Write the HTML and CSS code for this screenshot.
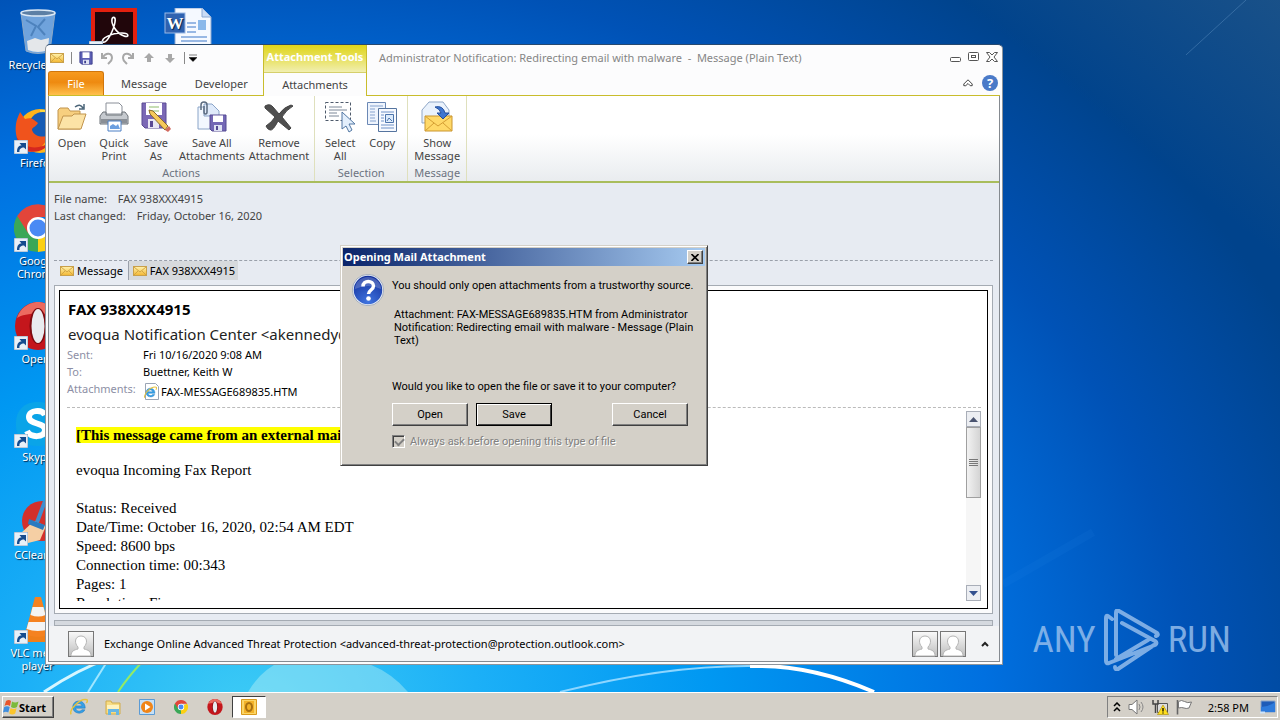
FILE: index.html
```html
<!DOCTYPE html>
<html lang="en">

<head>
    <meta charset="utf-8">
    <title>Desktop</title>
    <link rel="stylesheet" href="styles.css">
</head>

<body>
    <!-- shared icons -->
    <svg class="defs" width="0" height="0" aria-hidden="true">
        <defs>
            <linearGradient id="env" x1="0" y1="0" x2="0" y2="1">
                <stop offset="0" stop-color="#fff3b0" />
                <stop offset="1" stop-color="#f3b62f" />
            </linearGradient>
            <linearGradient id="grey" x1="0" y1="0" x2="0" y2="1">
                <stop offset="0" stop-color="#fafafa" />
                <stop offset="1" stop-color="#bdbdbd" />
            </linearGradient>
            <symbol id="mail" viewBox="0 0 14 12">
                <rect x=".5" y="1.5" width="13" height="9" fill="url(#env)" stroke="#c9a04a" />
                <path d="M1 2l6 5 6-5M1 10l4-4M13 10L9 6" fill="none" stroke="#d3a644" />
            </symbol>
            <symbol id="shortcut" viewBox="0 0 14 14">
                <rect width="14" height="14" fill="#e8f0f8" stroke="#8fa5bd" />
                <path d="M3 12C3 7 5 5.500 7.500 5.500L5.500 3H12v6.500L10 7.500C7 7.500 5 9 5.500 12z" fill="#154c8f" />
            </symbol>
            <symbol id="floppy" viewBox="0 0 16 16">
                <path d="M1 1h14v14H3l-2-2z" fill="#5c5fb5" stroke="#3b3d8c" />
                <path d="M4 1.500h8V8H4z" fill="#fff" />
                <path d="M4.500 10h7v5h-7z" fill="#dfe2f3" />
                <path d="M6 11h2v3H6z" fill="#3b3d8c" />
            </symbol>
            <symbol id="person" viewBox="0 0 26 26">
                <rect x=".5" y=".5" width="25" height="25" fill="url(#grey)" stroke="#777" />
                <path d="M3 25c0-5 3-6 7-7v-2c-2-2-2.500-4-2.500-6C7.500 7 10 5 13 5s5.500 2 5.500 5c0 2-.5 4-2.500 6v2c4 1 7 2 7 7z" fill="#fff" stroke="#b5b5b5" />
            </symbol>
            <symbol id="chrome" viewBox="0 0 48 48">
                <path d="M24 24L44.800 12A24 24 0 0 1 24 48z" fill="#fcd012" />
                <path d="M24 24v24A24 24 0 0 1 3.200 12z" fill="#3aa757" />
                <path d="M24 13h21A24 24 0 0 0 3.200 12L14 29z" fill="#e2453a" />
                <circle cx="24" cy="24" r="11" fill="#fff" />
                <circle cx="24" cy="24" r="8.500" fill="#4a8af4" />
            </symbol>
            <symbol id="opera" viewBox="0 0 48 48">
                <ellipse cx="24" cy="24" rx="23" ry="24" fill="#c4161c" />
                <path d="M3 16C8 2 20 0 24 0s16 2 21 16c-8-6-34-6-42 0z" fill="#ec6a5f" />
                <ellipse cx="24" cy="24" rx="8.500" ry="18" fill="#7d0c10" />
                <ellipse cx="24" cy="24" rx="6.500" ry="17" fill="#e9ecef" />
            </symbol>
            <symbol id="ie" viewBox="0 0 16 16">
                <path d="M13.500 9H5c.3 3 4.500 3.500 5.500 1.500h2.700c-1.700 4.500-10.700 4-10.700-2.500 0-7 11-7.500 11 1zM5 7h5.600C10.200 4.200 5.500 4.200 5 7z" fill="#35a0e6" stroke="#1c78c0" stroke-width=".5" />
                <path d="M1 14.500C-1 11 8 0 15 1.500c1 .8.300 2-.5 3" fill="none" stroke="#e9c33b" stroke-width="1.300" />
            </symbol>
        </defs>
    </svg>

    <main class="desktop">
        <svg class="wallpaper" viewBox="0 0 1280 693" preserveAspectRatio="none" aria-hidden="true">
            <defs>
                <radialGradient id="sky" gradientUnits="userSpaceOnUse" cx="250" cy="720" r="1150" gradientTransform="translate(250 720) scale(1 .8) translate(-250 -720)">
                    <stop offset="0" stop-color="#3fcdf5" />
                    <stop offset=".2" stop-color="#1cb0f7" />
                    <stop offset=".4" stop-color="#0098f2" />
                    <stop offset=".64" stop-color="#0070e0" />
                    <stop offset=".82" stop-color="#0052b6" />
                    <stop offset="1" stop-color="#00438c" />
                </radialGradient>
                <linearGradient id="haze" x1="0" y1="1" x2="1" y2="0">
                    <stop offset=".5" stop-color="#2a5a86" stop-opacity="0" />
                    <stop offset="1" stop-color="#2a5a86" stop-opacity=".6" />
                </linearGradient>
            </defs>
            <rect width="1280" height="693" fill="url(#sky)" />
            <rect x="960" width="320" height="260" fill="url(#haze)" />
            <path d="M1186 55l60-55" stroke="#5f93c4" opacity=".45" />
            <path d="M1003 585l90-52" stroke="#3b9bf5" stroke-width="8" opacity=".07" />
            <path d="M248 693q22-38 70-38 60 2 90 38z" fill="#c5f4f5" opacity=".4" />
            <path d="M44 693q34-23 66-34" stroke="#d5f6ff" stroke-width="3" fill="none" />
            <path d="M88 693l22-35" stroke="#9fe6ff" stroke-width="2" />
            <path d="M118 693q10-15 24-30" stroke="#93ea66" stroke-width="2" fill="none" />
            <path d="M560 693q110-28 200-26" stroke="#8dd6ff" stroke-width="2" fill="none" />
            <path d="M750 667q60-2 124 26" stroke="#fff" stroke-width="4" fill="none" />
        </svg>

        <ul class="shortcuts">
            <li>
                <svg viewBox="0 0 48 48">
                    <path d="M7 5h34l-5 38q-12 5-24 0z" fill="#b9d4ee" fill-opacity=".6" stroke="#8ea9c6" />
                    <path d="M13 33l8-3 6 2 8-2-1 12q-10 4-20 0z" fill="#e4e7ea" />
                    <path d="M12 12l10 6-5 10m14-17l-7 8 7 8" fill="none" stroke="#4d82bd" stroke-width="2" />
                    <ellipse cx="24" cy="5" rx="17" ry="3" fill="#5c7fa5" stroke="#dde9f5" stroke-width="1.500" />
                </svg>
                <span>Recycle Bin</span>
            </li>
            <li>
                <svg viewBox="0 0 48 48">
                    <circle cx="26" cy="25" r="22" fill="#ffb31a" />
                    <path d="M26 4c14-2 22 8 22 20H28z" fill="#ffd83d" />
                    <circle cx="29" cy="20" r="14" fill="#155bb5" />
                    <path d="M2 18C3 12 5 9 6 6l5 7c4-1 7-1 9 1l4 3c-2 4-6 4-6 7 2 7 12 8 16 5-2 10-10 16-18 17C7 44 0 32 2 18z" fill="#f0531c" />
                    <path d="M2 30c8 14 24 14 34 6-4 10-26 18-34-6z" fill="#d5271f" />
                    <use href="#shortcut" y="34" width="14" height="14" />
                </svg>
                <span>Firefox</span>
            </li>
            <li>
                <svg viewBox="0 0 48 48">
                    <use href="#chrome" width="48" height="48" />
                    <use href="#shortcut" y="34" width="14" height="14" />
                </svg>
                <span>Google Chrome</span>
            </li>
            <li>
                <svg viewBox="0 0 48 48">
                    <use href="#opera" width="48" height="48" />
                    <use href="#shortcut" y="34" width="14" height="14" />
                </svg>
                <span>Opera</span>
            </li>
            <li>
                <svg viewBox="0 0 48 48">
                    <rect x="2" y="2" width="44" height="44" rx="20" fill="#0aa4e8" />
                    <path d="M31 15c-3-6-16-5-16 2 0 8 16 5 16 13 0 8-15 8-18 1" fill="none" stroke="#fff" stroke-width="6" />
                    <use href="#shortcut" y="34" width="14" height="14" />
                </svg>
                <span>Skype</span>
            </li>
            <li>
                <svg viewBox="0 0 48 48">
                    <circle cx="28" cy="23" r="20" fill="#d3302b" />
                    <path d="M31 3l-9 24" stroke="#3f8fd0" stroke-width="4" />
                    <path d="M6 36l14-13 12 5-6 14-12 3z" fill="#f5cfa4" />
                    <path d="M15 21l16 6-2 5-15-6z" fill="#2a7abf" />
                    <use href="#shortcut" y="34" width="14" height="14" />
                </svg>
                <span>CCleaner</span>
            </li>
            <li>
                <svg viewBox="0 0 48 48">
                    <path d="M9 35h31l4 11H6z" fill="#ef7f1a" />
                    <path d="M21 1h6l10 37q-13 6-26 0z" fill="#f58220" />
                    <path d="M18.500 11h11l2 8q-7 3-15 0zM14.500 26h19l2 7q-12 4-23 0z" fill="#f4f4f4" />
                    <use href="#shortcut" y="34" width="14" height="14" />
                </svg>
                <span>VLC media player</span>
            </li>
            <li>
                <svg viewBox="0 0 48 48">
                    <rect x="4" y="2" width="42" height="44" fill="#21060b" stroke="#e3200f" stroke-width="4" />
                    <path d="M14 34c-3-3 8-9 19-9 8 0 7 5 2 3-8-3-13-12-12-17 1-3 4-2 3 3-1 7-8 22-12 20z" fill="none" stroke="#fff" stroke-width="1.600" />
                    <use href="#shortcut" y="33" width="14" height="14" />
                </svg>
            </li>
            <li>
                <svg viewBox="0 0 48 48">
                    <path d="M11 0h27l9 9v39H11z" fill="#f5f9ff" stroke="#8ba8d2" />
                    <path d="M38 0v9h9" fill="#c9dbf5" stroke="#8ba8d2" />
                    <path d="M23 15h9M23 19h9M23 24h9M17 29h26M17 33h26" stroke="#7aa2dc" stroke-width="1.500" />
                    <rect x="34" y="12" width="8" height="10" fill="#8ab8ea" />
                    <rect x="1" y="5" width="20" height="20" fill="#2f62b0" stroke="#9ab9e6" />
                    <text class="word-mark" x="11" y="21">W</text>
                </svg>
            </li>
        </ul>

        <div class="watermark">
            <span>ANY</span>
            <svg width="56" height="62" viewBox="0 0 56 62">
                <path d="M8 10L4 7q-2-1-2 2v43q0 3 3 2l46-18q3-2 0-4L18 14M12 46V4q0-4 3-2l38 22q2 2-1 3M50 36L14 60q-3 1-3-2M44 31L12 50" fill="none" stroke="currentColor" stroke-width="4" stroke-linejoin="round" stroke-linecap="round" />
            </svg>
            <span>RUN</span>
        </div>

        <section class="window">
            <header class="caption">
                <div class="caption-left">
                    <div class="quick-access">
                        <svg width="14" height="12"><use href="#mail" /></svg>
                        <i class="sep"></i>
                        <button aria-label="Save"><svg width="14" height="14"><use href="#floppy" /></svg></button>
                        <button aria-label="Undo"><svg width="14" height="14" viewBox="0 0 14 14"><path d="M2 2v5h5M3 6c3-5 9-4 9 1 0 3-2 4-4 6" fill="none" stroke="#a8a8a8" stroke-width="2" /></svg></button>
                        <button aria-label="Redo"><svg width="14" height="14" viewBox="0 0 14 14"><path d="M12 2v5H7M11 6C8 1 2 2 2 7c0 3 2 4 4 6" fill="none" stroke="#a8a8a8" stroke-width="2" /></svg></button>
                        <button aria-label="Previous"><svg width="14" height="14" viewBox="0 0 14 14"><path d="M7 2l5 5H9v4H5V7H2z" fill="#a8a8a8" /></svg></button>
                        <button aria-label="Next"><svg width="14" height="14" viewBox="0 0 14 14"><path d="M7 12l5-5H9V3H5v4H2z" fill="#a8a8a8" /></svg></button>
                        <i class="sep"></i>
                        <button class="more" aria-label="Customize"><svg width="8" height="8" viewBox="0 0 8 8"><path d="M0 1h8M0 3.500h8L4 7.500z" fill="#000" stroke="#000" stroke-width=".5" /></svg></button>
                    </div>
                    <nav class="tabs">
                        <button class="tab file">File</button>
                        <button class="tab">Message</button>
                        <button class="tab">Developer</button>
                    </nav>
                </div>
                <div class="context">
                    <div class="context-title">Attachment Tools</div>
                    <button class="tab active">Attachments</button>
                </div>
                <div class="caption-right">
                    <div class="title-row">
                        <h1>Administrator Notification: Redirecting email with malware &nbsp;-&nbsp; Message (Plain Text)</h1>
                        <div class="controls">
                            <button aria-label="Minimize"><svg width="12" height="12" viewBox="0 0 12 12"><rect x=".5" y="5.500" width="10" height="4" rx="1" fill="#fff" stroke="#555" /></svg></button>
                            <button aria-label="Restore"><svg width="12" height="12" viewBox="0 0 12 12"><rect x=".5" y=".5" width="10" height="8" rx="1" fill="#fff" stroke="#555" /><rect x="3.500" y="3.500" width="4" height="2" fill="#fff" stroke="#555" /></svg></button>
                            <button aria-label="Close"><svg width="12" height="12" viewBox="0 0 12 12"><path d="M.5 .5h3L6 3l2.500-2.500h3L8 5l3.500 4.500h-3L6 7l-2.500 2.500h-3L4 5z" fill="#fff" stroke="#555" /></svg></button>
                        </div>
                    </div>
                    <div class="help-row">
                        <button aria-label="Collapse ribbon"><svg width="10" height="8" viewBox="0 0 10 8"><path d="M5 .8L.8 5v1.700h2L5 4.500l2.200 2.200h2V5z" fill="#fff" stroke="#444" /></svg></button>
                        <button class="help" aria-label="Help">?</button>
                    </div>
                </div>
            </header>

            <div class="frame">
                <div class="ribbon">
                    <div class="group">
                        <div class="buttons">
                            <button>
                                <svg viewBox="0 0 32 32"><path d="M2 28V9l2-2h8l2 3h10v18z" fill="#f7cf7f" stroke="#c1944d" /><path d="M2 28l5-13h9l2-2h12l-5 15z" fill="#fce3a6" stroke="#c1944d" /><path d="M19 6q5-4 8 1m1-4v5h-5" fill="none" stroke="#4b6579" stroke-width="1.500" /></svg>
                                <span>Open</span>
                            </button>
                            <button>
                                <svg viewBox="0 0 32 32"><path d="M8 13V2h13l3 3v8z" fill="#fff" stroke="#8a8f98" /><path d="M5 11h3v3h16v-3h3l3 4v8H2v-8z" fill="#c6cacf" stroke="#6d7278" /><path d="M3 18h26v4H3z" fill="#8a8f96" /><path d="M10 20h13v10H10z" fill="#fff" stroke="#4b7fc4" /><path d="M12 28v-3l3-2 3 2 2-2 2 5z" fill="#6c9fe0" /></svg>
                                <span>Quick<br>Print</span>
                            </button>
                            <button>
                                <svg viewBox="0 0 32 32"><path d="M2 2h24v25H5l-3-3z" fill="#7b68b5" stroke="#5b4a93" /><path d="M6 2h16v12H6z" fill="#fff" /><path d="M9 6h10M9 10h10" stroke="#8dbb6a" /><path d="M8 18h11v9H8z" fill="#e9e7f3" /><path d="M10 20h3v6h-3z" fill="#5b4a93" /><path d="M9 9l4 1 15 15-3 4L10 13z" fill="#f6c95b" stroke="#8b6a2c" /><path d="M25 29l4-4 2 3-3 3z" fill="#d26a5f" /></svg>
                                <span>Save<br>As</span>
                            </button>
                            <button>
                                <svg viewBox="0 0 32 32"><path d="M2 6h13l6 6v16H2z" fill="#f3f8ff" stroke="#8aa4c8" /><path d="M8 3h8l7 7v5H8z" fill="#dfeafa" stroke="#8aa4c8" /><path d="M5 9v-5q0-3 3-3t3 3v7q0 2-1.500 2T8 11V5" fill="none" stroke="#5c6c80" stroke-width="1.500" /><path d="M14 14h16v16H16l-2-2z" fill="#7468b5" stroke="#544a93" /><path d="M17 14.500h10V21H17z" fill="#fff" /><path d="M18 24h8v6h-8z" fill="#dfe2f3" /><path d="M20 25h2v4h-2z" fill="#544a93" /></svg>
                                <span>Save All<br>Attachments</span>
                            </button>
                            <button>
                                <svg viewBox="0 0 32 32"><path d="M2 5q5-3 8 1l6 7Q21 6 28 4l2 1q-7 4-11 11l9 11-2 2-11-9q-5 10-8 9t-4-4q6-4 9-9L2 7z" fill="#4f4f4f" stroke="#444" /></svg>
                                <span>Remove<br>Attachment</span>
                            </button>
                        </div>
                        <div class="group-name">Actions</div>
                    </div>
                    <div class="group">
                        <div class="buttons">
                            <button>
                                <svg viewBox="0 0 32 32"><path d="M1.500 1.500h25v18h-25z" fill="none" stroke="#4e5a6b" stroke-dasharray="3 2" /><path d="M5 6h13M5 9h18M5 12h8M5 15h10" stroke="#7d8898" /><path d="M18 11v17l4-3 3 6 3-2-3-6h6z" fill="#e3effc" stroke="#5277a3" /></svg>
                                <span>Select<br>All</span>
                            </button>
                            <button>
                                <svg viewBox="0 0 32 32"><path d="M1.500 1.500h18v22h-18z" fill="#eef4fd" stroke="#6b88b5" /><path d="M4 5h13M4 8h5M4 11h5M4 14h5M4 17h5M4 20h6" stroke="#86a3cf" /><path d="M12.500 7.500h18v23h-18z" fill="#f7faff" stroke="#55749f" /><path d="M15 11h13M15 14h3M15 17h3M15 20h3M15 24h13M15 27h13" stroke="#6f92c8" /><path d="M19.500 13.500h8v8h-8zM21 20l2-3 3 3" fill="#dcebfb" stroke="#4d75ad" /></svg>
                                <span>Copy</span>
                            </button>
                        </div>
                        <div class="group-name">Selection</div>
                    </div>
                    <div class="group">
                        <div class="buttons">
                            <button>
                                <svg viewBox="0 0 32 32"><path d="M1 22V9l7-8h14l6 8v12z" fill="#eaf2fc" stroke="#8fa7c7" /><path d="M4 15h27v15H4z" fill="#ffd968" stroke="#c9952e" /><path d="M4 15l13 10 14-10M4 30l9-8M31 30l-9-8" fill="none" stroke="#d49e33" /><path d="M14 6q8-2 10 6h4l-6 6-6-6h4q-1-4-6-6z" fill="#3f76cf" stroke="#234f9d" /></svg>
                                <span>Show<br>Message</span>
                            </button>
                        </div>
                        <div class="group-name">Message</div>
                    </div>
                </div>

                <div class="info">
                    <p>File name: <b>FAX 938XXX4915</b></p>
                    <p>Last changed: <b>Friday, October 16, 2020</b></p>
                </div>

                <div class="doc-tabs">
                    <button><svg width="14" height="12"><use href="#mail" /></svg>Message</button>
                    <button class="selected"><svg width="14" height="12"><use href="#mail" /></svg>FAX 938XXX4915</button>
                </div>

                <div class="panel">
                    <article class="mail">
                        <h2>FAX 938XXX4915</h2>
                        <p class="from">evoqua Notification Center &lt;akennedy@</p>
                        <dl>
                            <dt>Sent:</dt>
                            <dd>Fri 10/16/2020 9:08 AM</dd>
                            <dt>To:</dt>
                            <dd>Buettner, Keith W</dd>
                            <dt>Attachments:</dt>
                            <dd class="attachment">
                                <svg width="18" height="18" viewBox="0 0 18 18"><path d="M2.500.5h10l3 3v13h-13z" fill="#fff" stroke="#9aa5b5" /><use href="#ie" x="1" y="3" width="13" height="13" /></svg>
                                FAX-MESSAGE689835.HTM
                            </dd>
                        </dl>
                        <div class="reading">
                            <div class="text">
                                <p class="warning"><mark>[This message came from an external mail source]</mark></p>
                                <p>evoqua Incoming Fax Report</p>
                                <p>Status: Received<br>Date/Time: October 16, 2020, 02:54 AM EDT<br>Speed: 8600 bps<br>Connection time: 00:343<br>Pages: 1<br>Resolution: Fine</p>
                            </div>
                            <div class="scrollbar">
                                <button aria-label="Scroll up"><svg width="9" height="5" viewBox="0 0 9 5"><path d="M4.500 0L9 5H0z" fill="#4a5470" /></svg></button>
                                <div class="thumb"><i></i></div>
                                <button aria-label="Scroll down"><svg width="9" height="5" viewBox="0 0 9 5"><path d="M0 0h9L4.500 5z" fill="#33508e" /></svg></button>
                            </div>
                        </div>
                    </article>
                </div>

                <div class="splitter"></div>
                <footer class="people">
                    <svg width="26" height="26"><use href="#person" /></svg>
                    <span>Exchange Online Advanced Threat Protection &lt;advanced-threat-protection@protection.outlook.com&gt;</span>
                    <svg width="26" height="26"><use href="#person" /></svg>
                    <svg width="26" height="26"><use href="#person" /></svg>
                    <button aria-label="Expand"><svg width="8" height="6" viewBox="0 0 8 6"><path d="M1 5l3-3 3 3" fill="none" stroke="#222" stroke-width="2" /></svg></button>
                </footer>
            </div>
        </section>

        <section class="dialog" role="dialog" aria-labelledby="dialog-title">
            <header>
                <h2 id="dialog-title">Opening Mail Attachment</h2>
                <button aria-label="Close"><svg width="8" height="7" viewBox="0 0 8 7"><path d="M.5 0l7 7M7.500 0l-7 7" stroke="#000" stroke-width="1.600" /></svg></button>
            </header>
            <div class="dialog-body">
                <svg class="question" width="32" height="32" viewBox="0 0 32 32">
                    <defs>
                        <radialGradient id="ball" cx=".5" cy=".9" r=".9">
                            <stop offset="0" stop-color="#3f74e0" />
                            <stop offset="1" stop-color="#132f9a" />
                        </radialGradient>
                    </defs>
                    <circle cx="16" cy="16" r="15" fill="url(#ball)" stroke="#e6ecf5" stroke-width="1.500" />
                    <circle cx="16" cy="16" r="15.700" fill="none" stroke="#7f8b9f" stroke-width=".6" />
                    <path d="M3 15a13 12 0 0 1 26 0q-13-6-26 0z" fill="#fff" opacity=".2" />
                    <path d="M11 12.500c0-7 10.500-6.500 10.500-.5 0 4-5 4-5 8" fill="none" stroke="#fff" stroke-width="3.500" />
                    <circle cx="16.500" cy="24.500" r="2.300" fill="#fff" />
                </svg>
                <div class="dialog-text">
                    <p>You should only open attachments from a trustworthy source.</p>
                    <p class="detail">Attachment: FAX-MESSAGE689835.HTM from Administrator<br>Notification: Redirecting email with malware - Message (Plain<br>Text)</p>
                    <p>Would you like to open the file or save it to your computer?</p>
                    <div class="actions">
                        <button>Open</button>
                        <button class="default">Save</button>
                        <button class="cancel">Cancel</button>
                    </div>
                    <div class="check">
                        <input type="checkbox" id="always" checked disabled>
                        <label for="always">Always ask before opening this type of file</label>
                    </div>
                </div>
            </div>
        </section>
    </main>

    <footer class="taskbar">
        <button class="start">
            <svg width="16" height="16" viewBox="0 0 16 16">
                <path d="M3 2q3-2 5 0L7 7Q4 5 1.500 7z" fill="#e8542a" />
                <path d="M9 2.500q3 2 6.500 0L14 8q-3 2-6 0z" fill="#7cba3b" />
                <path d="M1.200 8Q4 6.500 6.700 8L5.300 13.500Q3 12 0 13.500z" fill="#3f8ede" />
                <path d="M7.600 9q3 2 6 0l-1.400 5.500q-3 2-6 0z" fill="#fbc52d" />
            </svg>
            Start
        </button>
        <nav class="pinned">
            <button aria-label="Internet Explorer"><svg width="18" height="18"><use href="#ie" width="18" height="18" /></svg></button>
            <button aria-label="Explorer"><svg width="18" height="18" viewBox="0 0 18 18"><path d="M2 3h5l1 2h8v11H2z" fill="#f7dc83" stroke="#d2ac4a" /><path d="M3 7h12v4H3z" fill="#fff3bf" /><path d="M4 17v-6h11v6h-3v-3H7v3z" fill="#68b7e4" /></svg></button>
            <button aria-label="Media Player"><svg width="18" height="18" viewBox="0 0 18 18"><path d="M1.500 1.500h15v15h-15z" fill="#c6e0f6" stroke="#5b9bd5" /><circle cx="9" cy="9" r="6" fill="#f08519" /><path d="M7 5.500l5.500 3.500L7 12.500z" fill="#fff" /></svg></button>
            <button aria-label="Chrome"><svg width="14" height="14"><use href="#chrome" /></svg></button>
            <button aria-label="Opera"><svg width="16" height="16"><use href="#opera" /></svg></button>
            <button class="pressed" aria-label="Outlook"><svg width="18" height="18" viewBox="0 0 18 18"><path d="M1.500 1.500h15v15h-15z" fill="#fbd566" stroke="#d99a1c" /><rect x="4" y="3" width="10" height="12" fill="#f3b229" /><ellipse cx="9" cy="9" rx="3" ry="4" fill="none" stroke="#a86f10" stroke-width="2" /></svg></button>
        </nav>
        <div class="tray">
            <svg width="8" height="10" viewBox="0 0 8 10"><path d="M1 4l3-3 3 3M1 9l3-3 3 3" fill="none" stroke="#000" stroke-width="1.500" /></svg>
            <svg width="17" height="16" viewBox="0 0 17 16"><path d="M1 5.500h3l5-4.500v14l-5-4.500H1z" fill="#fff" stroke="#777" /><path d="M11 5q2 3 0 6M13 3q4 5 0 10" fill="none" stroke="#888" /></svg>
            <svg width="17" height="16" viewBox="0 0 17 16"><path d="M5.500 4.500h10v9h-10z" fill="#ddd" stroke="#555" /><path d="M1 1v4h5V1M3.500 5v9" fill="none" stroke="#444" stroke-width="1.500" /><path d="M11 6l5.500 9.500h-11z" fill="#ffdf1c" stroke="#a88a00" stroke-width=".6" /><path d="M11 9v3.500M11 13.500v1" stroke="#000" stroke-width="1.300" /></svg>
            <svg width="17" height="16" viewBox="0 0 17 16"><path d="M1.500 1v14.500" stroke="#666" stroke-width="1.600" /><path d="M2.500 2.500q3-2 6 0t7 .5L13 9q-3 1-5 0t-5.500 0z" fill="#fff" stroke="#777" /></svg>
            <time>2:58 PM</time>
            <svg width="16" height="14" viewBox="0 0 16 14"><path d="M1 1h14v11H1z" fill="#1e5cb8" stroke="#8aa4c8" /><path d="M1 7q7 0 14-5v10H1z" fill="#2e7bdc" /><path d="M0 12.500h5" stroke="#cfe3f7" stroke-width="2" /></svg>
        </div>
    </footer>
</body>

</html>
```
FILE: styles.css
```css
* {
    box-sizing: border-box;
}

body {
    margin: 0;
    height: 100vh;
    display: flex;
    flex-direction: column;
    overflow: hidden;
    font-family: "Noto Sans", "Open Sans", sans-serif;
    font-size: 11px;
    color: #000;
}

h1,
h2,
p,
dl,
dd,
ul {
    margin: 0;
    padding: 0;
    font-weight: normal;
}

button {
    font: inherit;
    color: inherit;
    padding: 0;
    border: 0;
    background: none;
}

svg {
    flex: none;
}

.defs {
    position: absolute;
}

/* Desktop */
.desktop {
    position: relative;
    flex: 1;
    min-height: 0;
    background: #0073e2;
}

.wallpaper {
    position: absolute;
    width: 100%;
    height: 100%;
}

.shortcuts {
    position: absolute;
    top: 8px;
    left: 0;
    display: grid;
    grid-template-rows: repeat(7, 98px);
    grid-auto-flow: column;
    grid-auto-columns: 75px;
    list-style: none;
    color: #fff;
    line-height: 13px;
    text-align: center;
    text-shadow: 1px 1px 1px #024;
}

.shortcuts li {
    display: flex;
    flex-direction: column;
    align-items: center;
}

.shortcuts li svg {
    width: 48px;
    height: 48px;
    margin-bottom: 2px;
}

.shortcuts span {
    max-width: 60px;
}

.shortcuts li:nth-child(8) {
    grid-column: 2;
    grid-row: 1;
}

.shortcuts li:nth-child(9) {
    grid-column: 3;
    grid-row: 1;
}

.word-mark {
    font: bold 17px "Liberation Serif", serif;
    fill: #fff;
    text-anchor: middle;
}

.watermark {
    position: absolute;
    right: 49px;
    bottom: 21px;
    display: flex;
    align-items: center;
    gap: 8px;
    font-family: "Roboto Condensed", "Liberation Sans Narrow", "Roboto", sans-serif;
    font-size: 37px;
    line-height: 62px;
    color: #9cc2ee;
    opacity: .8;
}

/* Message window */
.window {
    position: absolute;
    top: 44px;
    left: 45px;
    right: 277px;
    bottom: 27px;
    display: flex;
    flex-direction: column;
    padding: 0 2px 2px;
    border: 1px solid #8d949c;
    border-top-color: #26486f;
    border-radius: 5px 5px 0 0;
    background: #fcfcfd;
}

.caption {
    display: flex;
    height: 51px;
    color: #444;
}

.caption-left {
    display: flex;
    flex-direction: column;
    justify-content: space-between;
    width: 215px;
    border-bottom: 1px solid #c9bd2c;
}

.quick-access {
    display: flex;
    align-items: center;
    gap: 7px;
    height: 27px;
    padding-left: 2px;
}

.quick-access button {
    display: flex;
}

.sep {
    width: 1px;
    height: 12px;
    background: #888;
}

.quick-access .more {
    margin-left: -3px;
}

.tabs {
    display: flex;
    align-items: flex-end;
}

.tab {
    height: 23px;
    padding: 0 14px;
}

.tab.file {
    width: 56px;
    height: 24px;
    margin-right: 3px;
    padding: 0;
    border: 1px solid #d0760c;
    border-bottom: 0;
    border-radius: 3px 3px 0 0;
    background: linear-gradient(#f79a1f, #ee8a10 45%, #ffc04d);
    color: #fff;
}

.context {
    display: flex;
    flex-direction: column;
    width: 104px;
    border: solid #c9bd2c;
    border-width: 0 1px;
}

.context-title {
    height: 28px;
    border-bottom: 1px solid #d5cf6c;
    background: linear-gradient(#dfd51a, #e8e15f 50%, #f1efb0);
    color: #fff;
    font-weight: bold;
    line-height: 24px;
    text-align: center;
    white-space: nowrap;
}

.tab.active {
    height: 22px;
    padding: 0;
}

.caption-right {
    flex: 1;
    border-bottom: 1px solid #c9bd2c;
    padding: 0 2px 0 12px;
}

.title-row,
.help-row {
    display: flex;
    align-items: center;
    justify-content: space-between;
    height: 25px;
}

h1 {
    font-size: 11px;
    color: #868686;
}

.controls {
    display: flex;
    gap: 6px;
}

.controls button,
.help-row button {
    display: flex;
}

.help-row {
    justify-content: flex-end;
    gap: 9px;
}

.help-row .help {
    justify-content: center;
    width: 16px;
    height: 16px;
    border-radius: 50%;
    background: #4a7ac8;
    color: #fff;
    font-size: 13px;
    font-weight: bold;
    line-height: 16px;
}

.frame {
    flex: 1;
    min-height: 0;
    display: flex;
    flex-direction: column;
    border: 1px solid #858a90;
    border-top: 0;
    background: #e7ebf2;
}

.ribbon {
    display: flex;
    border-bottom: 2px solid #a9bd5c;
    background: linear-gradient(#fff 45%, #e9ecef);
    color: #444;
}

.group {
    padding: 5px 4px 1px;
    border-right: 1px solid #dfe0bd;
    text-align: center;
}

.group:first-child {
    padding-right: 3px;
    padding-left: 2px;
}

.buttons {
    display: flex;
    height: 65px;
    line-height: 13px;
}

.buttons button {
    display: flex;
    flex-direction: column;
    align-items: center;
    gap: 3px;
    min-width: 42px;
    padding: 0 2px;
}

.buttons svg {
    width: 32px;
    height: 32px;
}

.group-name {
    line-height: 14px;
    color: #6c7380;
}

.info {
    margin: 0 6px 0 5px;
    padding: 7px 0 36px;
    border-bottom: 1px dashed #9aa0aa;
    line-height: 17px;
    color: #444;
}

.info b {
    margin-left: 8px;
    font-weight: normal;
}

.doc-tabs {
    display: flex;
    margin: 0 5px 5px;
}

.doc-tabs button {
    display: flex;
    align-items: center;
    gap: 3px;
    height: 19px;
    padding: 0 5px 0 6px;
    border-right: 1px solid #9aa0aa;
}

.doc-tabs .selected {
    padding: 0 3px 0 4px;
    border: 0;
    background: #d7dadd;
}

.panel {
    flex: 1;
    min-height: 0;
    display: flex;
    margin: 0 6px 0 5px;
    padding: 4px;
    border: 1px solid #a5abb3;
    background: #fbfbfc;
}

.mail {
    flex: 1;
    min-width: 0;
    display: flex;
    flex-direction: column;
    padding: 6px 6px 7px 7px;
    border: 1px solid #000;
    background: #fff;
}

.mail h2 {
    padding-left: 1px;
    font-size: 15px;
    font-weight: bold;
    line-height: 25px;
}

.from {
    padding-left: 1px;
    font-size: 15px;
    line-height: 24px;
    color: #222;
}

.mail dl {
    display: grid;
    grid-template-columns: 76px 1fr;
    padding-bottom: 3px;
    border-bottom: 1px dashed #bbb;
    line-height: 17px;
}

.mail dt {
    color: #8d8fa5;
}

.attachment {
    display: flex;
    align-items: center;
    line-height: 24px;
}

.reading {
    flex: 1;
    min-height: 0;
    display: flex;
    justify-content: space-between;
    margin-top: 3px;
}

.text {
    padding: 15px 9px 0;
    overflow: hidden;
    font-family: "Liberation Serif", serif;
    font-size: 15px;
    line-height: 19px;
}

.text p {
    margin-bottom: 19px;
}

.text .warning {
    margin-bottom: 16px;
}

.text mark {
    background: #ff0;
    font-weight: bold;
}

.scrollbar {
    display: flex;
    flex-direction: column;
    width: 15px;
    background: #f6f6f6;
}

.scrollbar button {
    display: flex;
    align-items: center;
    justify-content: center;
    height: 16px;
    border: 1px solid #a9aeb8;
    background: #eceef2;
}

.scrollbar button:last-child {
    margin-top: auto;
}

.thumb {
    display: flex;
    align-items: center;
    justify-content: center;
    height: 71px;
    border: 1px solid #a0a0a0;
    background: linear-gradient(90deg, #f2f2f2, #d4d4d4);
}

.thumb i {
    width: 9px;
    height: 7px;
    background: repeating-linear-gradient(#777 0 1px, transparent 1px 2px);
}

.splitter {
    height: 6px;
    margin: 6px 6px 0 5px;
    border: 1px solid #a5abb3;
    background: #d5d9df;
}

.people {
    display: flex;
    align-items: center;
    height: 35px;
    gap: 2px;
    padding: 0 10px 0 19px;
    background: #f2f3f5;
}

.people span {
    flex: 1;
    margin-left: 8px;
}

.people button {
    display: flex;
    margin-left: 13px;
}

/* Dialog */
.dialog {
    position: absolute;
    top: 245px;
    left: 340px;
    width: 368px;
    padding: 2px;
    border: 1px solid;
    border-color: #d4d0c8 #404040 #404040 #d4d0c8;
    box-shadow: inset 1px 1px #fff, inset -1px -1px #808080;
    background: #d4d0c8;
    font-family: "Roboto", "Liberation Sans", sans-serif;
}

.dialog header {
    display: flex;
    align-items: center;
    justify-content: space-between;
    height: 18px;
    padding: 0 2px 0 1px;
    background: linear-gradient(90deg, #0a246a, #a6caf0);
    color: #fff;
}

.dialog h2 {
    font-family: "Noto Sans", sans-serif;
    font-size: 11px;
    font-weight: bold;
    line-height: 16px;
}

.dialog header button,
.actions button,
.start {
    border: 1px solid;
    border-color: #fff #404040 #404040 #fff;
    box-shadow: inset -1px -1px #808080;
    background: #d4d0c8;
}

.dialog header button {
    display: flex;
    align-items: center;
    justify-content: center;
    width: 16px;
    height: 14px;
}

.dialog-body {
    display: flex;
    gap: 8px;
    padding: 8px 17px 15px 9px;
    line-height: 13px;
}

.dialog-text {
    flex: 1;
    min-width: 0;
    padding-top: 5px;
    white-space: nowrap;
}

.dialog-text .detail {
    padding-left: 2px;
    margin: 16px 0 33px;
}

.actions {
    display: flex;
    gap: 8px;
    margin: 10px 0 9px;
}

.actions button {
    width: 76px;
    height: 23px;
}

.actions .default {
    border-color: #000;
    box-shadow: inset 1px 1px #fff, inset -1px -1px #404040;
}

.actions .cancel {
    margin-left: auto;
}

.check {
    display: flex;
    align-items: center;
    gap: 5px;
    color: #808080;
    text-shadow: 1px 1px #fff;
}

.check input {
    appearance: none;
    width: 13px;
    height: 13px;
    margin: 0;
    border: 1px solid;
    border-color: #808080 #fff #fff #808080;
    box-shadow: inset 1px 1px #404040;
}

.check input::before {
    content: "";
    display: block;
    width: 7px;
    height: 4px;
    margin: 2px;
    border: solid #808080;
    border-width: 0 0 2px 2px;
    transform: rotate(-45deg);
}

/* Taskbar */
.taskbar {
    display: flex;
    align-items: center;
    height: 28px;
    padding: 1px 2px 0;
    border-top: 1px solid #fff;
    background: #d4d0c8;
}

.start {
    display: flex;
    align-items: center;
    width: 52px;
    height: 22px;
    font-weight: bold;
}

.pinned {
    display: flex;
    margin-left: 8px;
}

.pinned button {
    display: flex;
    align-items: center;
    justify-content: center;
    width: 34px;
    height: 22px;
}

.pinned .pressed {
    border: 1px solid;
    border-color: #404040 #fff #fff #404040;
    background: #fff;
}

.tray {
    display: flex;
    align-items: center;
    gap: 7px;
    height: 22px;
    margin-left: auto;
    padding: 0 1px 0 5px;
    border: 1px solid;
    border-color: #808080 #fff #fff #808080;
}

.tray time {
    margin: 0 4px 0 8px;
}
```
